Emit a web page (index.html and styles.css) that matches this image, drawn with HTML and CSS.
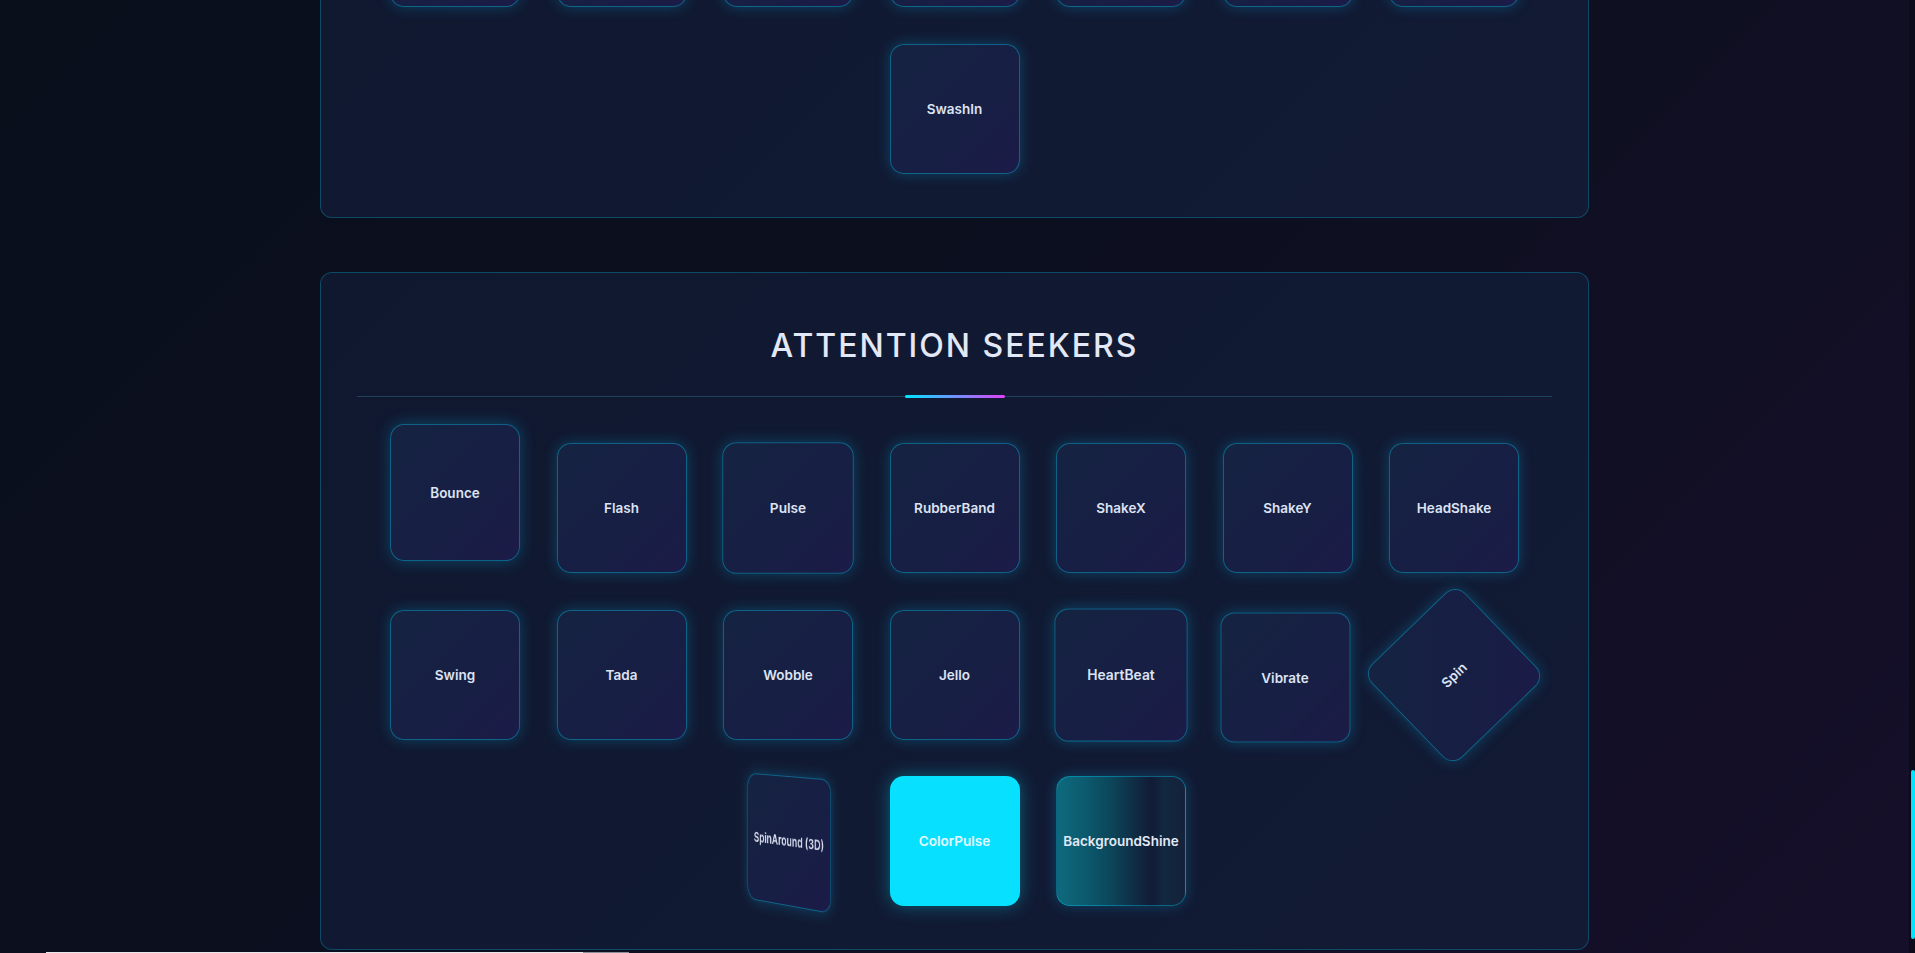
FILE: index.html
```html
<!DOCTYPE html>
<html lang="en">
<head>
<meta charset="utf-8">
<title>Animation Showcase</title>
<link rel="stylesheet" href="styles.css">
</head>
<body>
<main class="page">
  <section class="group">
    <h2 class="group-title">Magic Entrances</h2>
    <div class="cards">
      <div class="card">PuffIn</div>
      <div class="card">VanishIn</div>
      <div class="card">SpaceInUp</div>
      <div class="card">SpaceInDown</div>
      <div class="card">SpaceInLeft</div>
      <div class="card">SpaceInRight</div>
      <div class="card">TinUpIn</div>
      <div class="card">SwashIn</div>
    </div>
  </section>

  <section class="group">
    <h2 class="group-title">Attention Seekers</h2>
    <div class="cards">
      <div class="card card--bounce">Bounce</div>
      <div class="card">Flash</div>
      <div class="card card--pulse">Pulse</div>
      <div class="card">RubberBand</div>
      <div class="card">ShakeX</div>
      <div class="card">ShakeY</div>
      <div class="card">HeadShake</div>
      <div class="card">Swing</div>
      <div class="card">Tada</div>
      <div class="card">Wobble</div>
      <div class="card">Jello</div>
      <div class="card card--heartbeat">HeartBeat</div>
      <div class="card card--vibrate">Vibrate</div>
      <div class="card card--spin">Spin</div>
      <div class="card card--spin3d">SpinAround (3D)</div>
      <div class="card card--colorpulse">ColorPulse</div>
      <div class="card card--shine">BackgroundShine</div>
    </div>
  </section>
</main>

<div class="scrollbar"><div class="scrollbar-thumb"></div></div>
<div class="bottom-line"><span class="bottom-line-a"></span><span class="bottom-line-b"></span></div>
</body>
</html>
```

FILE: styles.css
```css
* {
  box-sizing: border-box;
}

html {
  height: 100%;
  background: linear-gradient(135deg, #0a0f1c 0%, #0c0f1f 45%, #120f25 75%, #160f2a 100%);
}

body {
  margin: 0 6px 0 0;
  min-height: 100%;
  overflow: hidden;
  font-family: Inter, "Noto Sans", "Liberation Sans", sans-serif;
  color: #dfe4f3;
}

.page {
  width: 1269px;
  margin: -294px auto 0;
  display: flex;
  flex-direction: column;
  gap: 54px;
}

.group {
  background: linear-gradient(135deg, #10182f 0%, #111a33 60%, #121a34 100%);
  border: 1px solid rgba(0, 200, 240, 0.28);
  border-radius: 12px;
  padding: 36px;
}

.group-title {
  position: relative;
  margin: 18px 0 0;
  padding-bottom: 31px;
  border-bottom: 1px solid rgba(60, 140, 170, 0.35);
  text-align: center;
  text-transform: uppercase;
  font-size: 32px;
  line-height: 38.4px;
  font-weight: 500;
  letter-spacing: 2px;
  color: #e3e8f6;
}

.group-title::after {
  content: "";
  position: absolute;
  left: 50%;
  bottom: -2px;
  width: 100px;
  height: 3px;
  margin-left: -50px;
  border-radius: 2px;
  background: linear-gradient(90deg, #00e5ff, #e040fb);
}

.cards {
  margin-top: 46px;
  padding-bottom: 7px;
  display: flex;
  flex-wrap: wrap;
  justify-content: center;
  gap: 36.5px 36.5px;
}

.card {
  width: 130px;
  height: 130px;
  display: flex;
  align-items: center;
  justify-content: center;
  text-align: center;
  border-radius: 14px;
  border: 1px solid rgba(0, 200, 240, 0.4);
  background: linear-gradient(135deg, #152341 0%, #171f44 55%, #1b1b47 100%);
  box-shadow: 0 0 14px rgba(0, 200, 255, 0.25);
  font-size: 13.5px;
  font-weight: 600;
  color: #dde3f3;
}

.card--bounce {
  transform: translateY(-15.5px) scaleY(1.054);
}

.card--pulse {
  transform: scale(1.012);
}

.card--heartbeat {
  transform: scale(1.025);
}

.card--vibrate {
  transform: translate(-2.5px, 2.5px);
}

.card--spin {
  transform: rotate(-44deg);
}

.card--spin3d {
  transform: skewY(7.5deg) perspective(1600px) rotateY(-50deg);
}

.card--colorpulse {
  background: #07e1ff;
  border-color: rgba(0, 229, 255, 0.6);
  box-shadow: 0 0 18px rgba(0, 229, 255, 0.35);
  color: #e8f7ff;
}

.card--shine {
  background: linear-gradient(90deg, #0e697d 0%, #0c5c70 20%, #0c465a 42%, #0f2d45 60%, #121b35 74%, #112840 84%, #13243c 92%, #14223b 100%);
  color: #e3e9f6;
}

.scrollbar {
  position: fixed;
  top: 0;
  right: 0;
  bottom: 0;
  width: 6px;
  background: #0d0b1a;
}

.scrollbar-thumb {
  position: absolute;
  top: 770px;
  right: 0;
  width: 4px;
  height: 169px;
  border-radius: 2px;
  background: #00e5ff;
}

.bottom-line {
  position: fixed;
  left: 46px;
  bottom: 0;
  height: 1px;
  display: flex;
}

.bottom-line-a {
  width: 537px;
  background: #e6e8ec;
}

.bottom-line-b {
  width: 46px;
  background: #8a8f99;
}
```
